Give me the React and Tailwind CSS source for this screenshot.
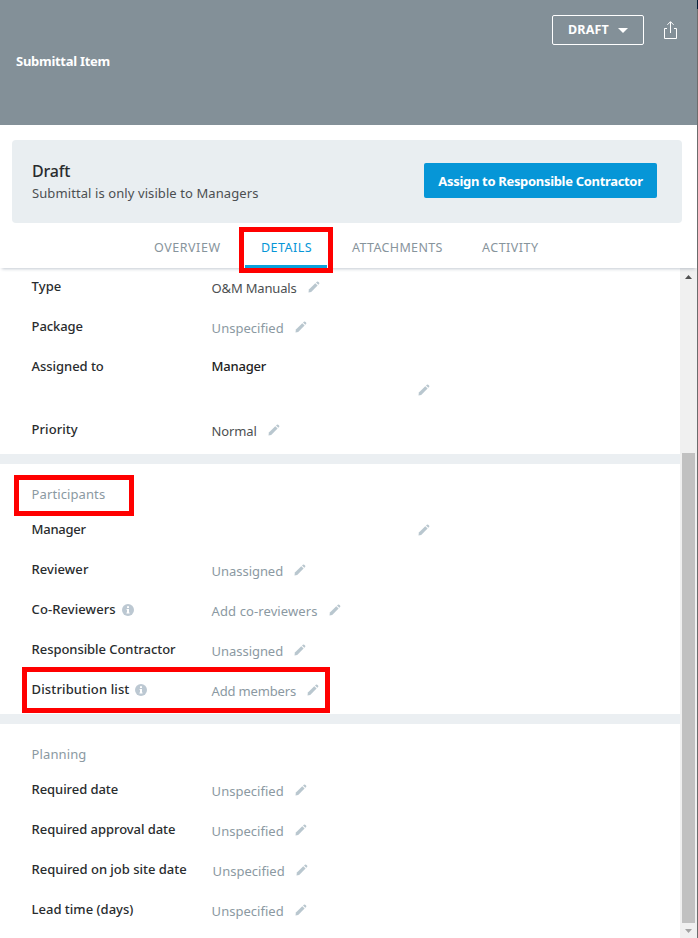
import clsx from "clsx";

const detailRows = [
    { label: "Type", labelTracking: "tracking-[0.1px]", value: "O&M Manuals", valueTracking: "tracking-[-0.17px]", filled: true },
    { label: "Package", labelTracking: "tracking-[-0.1px]", value: "Unspecified", valueTracking: "tracking-[0.03px]" },
    { label: "Assigned to", labelTracking: "tracking-[-0.05px]", value: "Manager", tall: true },
    { label: "Priority", labelTracking: "tracking-[0.05px]", value: "Normal", valueTracking: "tracking-[-0.15px]", filled: true },
];

const participantRows = [
    { label: "Manager", labelTracking: "tracking-[-0.25px]", value: "" },
    { label: "Reviewer", labelTracking: "tracking-[0.05px]", value: "Unassigned", valueTracking: "tracking-[-0.05px]" },
    { label: "Co-Reviewers", labelTracking: "tracking-[0.08px]", value: "Add co-reviewers", valueTracking: "tracking-[0.1px]", info: true },
    { label: "Responsible Contractor", labelTracking: "tracking-[-0.06px]", value: "Unassigned", valueTracking: "tracking-[-0.05px]" },
    { label: "Distribution list", labelTracking: "tracking-[0.12px]", value: "Add members", valueTracking: "tracking-[-0.17px]", info: true },
];

const planningRows = [
    { label: "Required date", labelTracking: "tracking-[-0.08px]", value: "Unspecified", valueTracking: "tracking-[0.03px]" },
    { label: "Required approval date", labelTracking: "tracking-[-0.06px]", value: "Unspecified", valueTracking: "tracking-[0.03px]" },
    { label: "Required on job site date", labelTracking: "tracking-[-0.02px]", value: "Unspecified", valueTracking: "tracking-[0.03px]", indent: true },
    { label: "Lead time (days)", labelTracking: "tracking-[0px]", value: "Unspecified", valueTracking: "tracking-[0.03px]" },
];

function PencilIcon() {
    return (
        <svg width="12" height="12" viewBox="0 0 12 12" fill="#b9c7cf" className="shrink-0">
            <path d="M.5 11.5.9 8.6 7.3 2.2 9.6 4.5 3.2 10.9Z" />
            <path d="M8 1.5 8.9.7a1 1 0 0 1 1.3 0l.9.9a1 1 0 0 1 0 1.3l-.8.9Z" />
        </svg>
    );
}

function InfoIcon() {
    return (
        <svg width="12" height="12" viewBox="0 0 12 12" className="ml-1.5 shrink-0">
            <circle cx="6" cy="6" r="6" fill="#bcc8d2" />
            <path d="M5 2.3h2v1.6H5zM4.6 5H7v3.4h.6v1.1H4.4V8.4H5V6h-.4z" fill="#fff" />
        </svg>
    );
}

function ShareIcon() {
    return (
        <svg width="13" height="18" viewBox="0 0 13 18" fill="none" stroke="#fff" className="ml-5">
            <path d="M3 7.5H.5v10h12v-10H10M6.5 12V.8M3.4 3.8 6.5.7l3.1 3.1" />
        </svg>
    );
}

function Row({ row }) {
    return (
        <div className={clsx("flex", row.tall ? "h-[63px]" : "h-10")}>
            <div className={clsx("flex h-10 w-[180px] items-center font-medium text-[#292c2e]", row.labelTracking)}>
                {row.label}
                {row.info && <InfoIcon />}
            </div>
            {row.tall || !row.value ? (
                <div className={clsx("flex w-[218px] justify-between", row.tall ? "items-start" : "items-center")}>
                    <span className="h-10 font-medium leading-[39px] tracking-[-0.2px] text-[#222]">{row.value}</span>
                    <span className={row.tall ? "mt-[37px]" : ""}>
                        <PencilIcon />
                    </span>
                </div>
            ) : (
                <div className={clsx("flex h-10 items-center gap-[11px]", row.indent && "pl-px")}>
                    <span className={clsx("pt-[3px]", row.valueTracking, row.filled ? "text-[#4c4f51]" : "text-[#8b99a2]")}>
                        {row.value}
                    </span>
                    <PencilIcon />
                </div>
            )}
        </div>
    );
}

function Section({ title, rows, first }) {
    return (
        <section className={clsx("pl-[31.6px]", !first && "border-t-[10px] border-[#ebeff2]")}>
            {title && (
                <h3 className="flex h-[46px] items-center pt-[15px] tracking-[0.1px] text-[#8b99a2]">{title}</h3>
            )}
            {rows.map((row) => (
                <Row key={row.label} row={row} />
            ))}
        </section>
    );
}

function Scrollbar() {
    return (
        <div className="flex w-[17px] flex-col items-center bg-[#f0f0f0]">
            <div className="flex h-[17px] items-center">
                <svg width="7" height="4" viewBox="0 0 7 4" fill="#505050">
                    <path d="M0 4 3.5 0 7 4z" />
                </svg>
            </div>
            <div className="mt-[168px] h-[470px] w-[13px] bg-[#c1c1c1]" />
            <svg width="7" height="4" viewBox="0 0 7 4" fill="#a3a3a3" className="mt-1.5">
                <path d="M0 0h7L3.5 4z" />
            </svg>
        </div>
    );
}

export default function App() {
    return (
        <div className="relative flex h-[938px] w-[698px] overflow-hidden bg-white font-['Noto_Sans','Open_Sans',sans-serif] text-[13px]">
            <main className="flex w-[697px] flex-col">
                <header className="flex h-[125px] items-start bg-[#839098] pt-[15px] pl-4 text-white">
                    <h1 className="mt-9 w-[536px] font-bold leading-5 tracking-[-0.28px]">Submittal Item</h1>
                    <button className="flex h-[30px] w-[92px] items-center rounded-[2px] border border-white pl-[15px] text-[12.5px] font-bold tracking-[0.15px]">
                        DRAFT
                        <svg width="10" height="5" viewBox="0 0 10 5" fill="#fff" className="ml-[9px]">
                            <path d="M0 0h10L5 5z" />
                        </svg>
                    </button>
                    <div className="mt-1.5">
                        <ShareIcon />
                    </div>
                </header>

                <div className="mt-[15px] mr-[15px] ml-3 flex h-[83px] items-center justify-between rounded bg-[#e9eef1] pr-[25px] pl-5">
                    <div>
                        <h2 className="text-base font-medium leading-5 tracking-[-0.2px] text-[#292c2e]">Draft</h2>
                        <p className="mt-0.5 leading-5 tracking-[0.09px] text-[#4c4f51]">Submittal is only visible to Managers</p>
                    </div>
                    <button className="mb-0.5 h-[35px] w-[233px] rounded-[2px] bg-[#0696d7] pt-0.5 font-bold tracking-[-0.32px] text-white">
                        Assign to Responsible Contractor
                    </button>
                </div>

                <nav className="relative z-10 flex h-[45px] bg-white pt-0.5 text-[12.5px] leading-[45px] text-[#87949c] shadow-[0_3px_3px_-2px_rgba(60,80,110,0.3)]">
                    <span className="ml-[154px] w-[91px] tracking-[0.55px]">OVERVIEW</span>
                    <span className="h-[43px] w-[82px] border-b-3 border-[#0ba1db] pl-4 tracking-[0.45px] text-[#0696d7]">DETAILS</span>
                    <span className="ml-[25px] w-[130px] tracking-[0.35px]">ATTACHMENTS</span>
                    <span className="tracking-[0.5px]">ACTIVITY</span>
                </nav>

                <div className="flex flex-1">
                    <div className="-mt-px w-[680px]">
                        <Section rows={detailRows} first />
                        <div className="h-1" />
                        <Section title="Participants" rows={participantRows} />
                        <div className="h-1" />
                        <Section title="Planning" rows={planningRows} />
                    </div>
                    <Scrollbar />
                </div>
            </main>
            <div className="w-px border-t-[9px] border-[#061b33] bg-[#6c6c6c]" />

            {/* callout boxes */}
            <div className="absolute top-[227px] left-[239px] z-20 h-[46px] w-[94px] border-[5px] border-[#ff0000]" />
            <div className="absolute top-[475px] left-[14px] z-20 h-[41px] w-[120px] border-[5px] border-[#ff0000]" />
            <div className="absolute top-[667px] left-[22px] z-20 h-[46px] w-[308px] border-[5px] border-[#ff0000]" />
        </div>
    );
}
